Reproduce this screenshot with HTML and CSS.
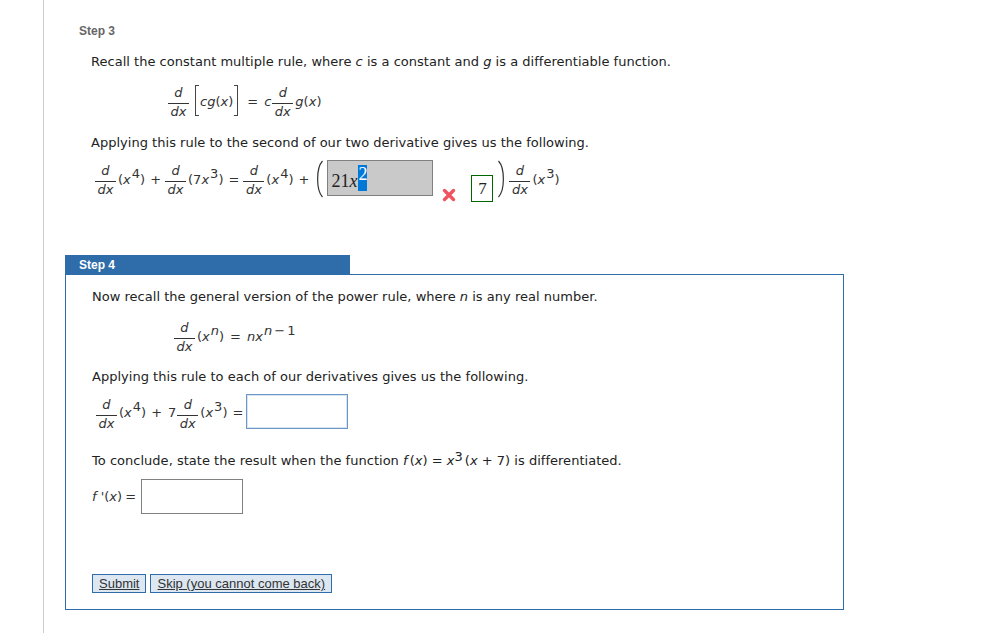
FILE: index.html
```html
<!DOCTYPE html>
<html lang="en">
<head>
<meta charset="utf-8">
<title>Step 4</title>
<link rel="stylesheet" href="styles.css">
</head>
<body>
<main class="page">
  <section class="prev">
    <h2 class="step-label">Step 3</h2>
    <div class="body-prev">
      <p class="line l1">Recall the constant multiple rule, where <i>c</i> is a constant and <i>g</i> is a differentiable function.</p>
      <div class="math f1">
        <span class="frac"><span class="num">d</span><span class="den">dx</span></span>
        <span class="bracket-l"></span><i class="cg">cg</i><span>(</span><i>x</i><span>)</span><span class="bracket-r"></span>
        <span class="eq">=</span><i class="c">c</i>
        <span class="frac"><span class="num">d</span><span class="den">dx</span></span>
        <i>g</i><span>(</span><i>x</i><span>)</span>
      </div>
      <p class="line l2">Applying this rule to the second of our two derivative gives us the following.</p>
      <div class="math f2">
        <span class="frac"><span class="num">d</span><span class="den">dx</span></span>
        <span class="term">(<i>x</i><sup>4</sup>)</span><span class="op">+</span>
        <span class="frac"><span class="num">d</span><span class="den">dx</span></span>
        <span class="term">(7<i>x</i><sup>3</sup>)</span><span class="op">=</span>
        <span class="frac"><span class="num">d</span><span class="den">dx</span></span>
        <span class="term">(<i>x</i><sup>4</sup>)</span><span class="op">+</span>
        <svg class="paren" width="11" height="38" viewBox="0 0 11 38"><path d="M9.5 1C3 8 3 30 9.5 37" fill="none" stroke="#333" stroke-width="1.2"/></svg>
        <span class="answer">21<i>x</i><span class="sel">2</span></span>
        <svg class="cross" width="14" height="14" viewBox="0 0 14 14"><path d="M2.5 2.5L11.5 11.5M11.5 2.5L2.5 11.5" stroke="#f0555f" stroke-width="3.4" stroke-linecap="round"/></svg>
        <span class="correct">7</span>
        <svg class="paren closing" width="11" height="38" viewBox="0 0 11 38"><path d="M1.5 1C8 8 8 30 1.5 37" fill="none" stroke="#333" stroke-width="1.2"/></svg>
        <span class="frac"><span class="num">d</span><span class="den">dx</span></span>
        <span class="term">(<i>x</i><sup>3</sup>)</span>
      </div>
    </div>
  </section>

  <section class="current">
    <h2 class="tab">Step 4</h2>
    <div class="box">
      <p class="line b1">Now recall the general version of the power rule, where <i>n</i> is any real number.</p>
      <div class="math f3">
        <span class="frac"><span class="num">d</span><span class="den">dx</span></span>
        <span class="term">(<i>x</i><sup><i>n</i></sup>)</span><span class="op">=</span>
        <span class="term"><i>nx</i><sup class="exp"><i>n</i> &minus; 1</sup></span>
      </div>
      <p class="line b2">Applying this rule to each of our derivatives gives us the following.</p>
      <div class="math f4">
        <span class="frac"><span class="num">d</span><span class="den">dx</span></span>
        <span class="term">(<i>x</i><sup>4</sup>)</span><span class="op">+</span><span class="seven">7</span>
        <span class="frac"><span class="num">d</span><span class="den">dx</span></span>
        <span class="term">(<i>x</i><sup>3</sup>)</span><span class="op">=</span>
        <input class="field focus" type="text" aria-label="answer">
      </div>
      <p class="line b3">To conclude, state the result when the function <i class="fn">f</i>(<i>x</i>) = <i>x</i><sup class="cube">3</sup>(<i>x</i> + 7) is differentiated.</p>
      <div class="math f5">
        <span class="term"><i>f</i> '(<i>x</i>)</span><span class="op">=</span>
        <input class="field" type="text" aria-label="f prime of x">
      </div>
      <div class="actions">
        <button class="btn" type="button">Submit</button>
        <button class="btn" type="button">Skip (you cannot come back)</button>
      </div>
    </div>
  </section>
</main>
</body>
</html>
```

FILE: styles.css
```css
html, body { margin: 0; padding: 0; background: #fff; }
body { width: 992px; height: 633px; overflow: hidden; font-family: "DejaVu Sans", Verdana, sans-serif; font-size: 13px; color: #222; }
.page { margin-left: 43px; width: 801px; height: 633px; box-sizing: border-box; border-left: 1px solid #ccc; padding-left: 21px; padding-top: 23px; }
.step-label { margin: 0; font: bold 12px/16px "Liberation Sans", Arial, sans-serif; color: #666; padding-left: 14px; }
.body-prev { padding-left: 26px; }
.line { margin: 0; line-height: 18px; white-space: nowrap; letter-spacing: .02px; }
.line sup { font-size: 13px; line-height: 0; vertical-align: 4px; }
.fn { margin-right: 2px; }
.cube { margin-right: 2px; }
.l1 { margin-top: 14px; }
.math { display: flex; align-items: center; white-space: nowrap; color: #333; }
.math i { font-style: italic; }
.frac { display: inline-flex; flex-direction: column; align-items: center; width: 21px; line-height: 15px; font-style: italic; margin: 2px 2px 0 0; flex: none; }
.num { padding-bottom: 3px; }
.den { border-top: 1px solid #333; width: 100%; text-align: center; }
.term sup { font-size: 13px; line-height: 0; vertical-align: 6px; margin-left: 1px; }
.exp { word-spacing: -2px; }
.op { margin: 0 6px; }
.eq { margin: 0 6px 0 8px; }
.bracket-l, .bracket-r { width: 3px; height: 29px; border: 1px solid #444; margin-top: -1px; }
.bracket-l { border-right: 0; margin-left: 4px; margin-right: 1px; }
.bracket-r { border-left: 0; margin-left: 1px; margin-right: 1px; }
.c { margin-right: 1px; }
.f1 { margin: 14px 0 0 77px; height: 32px; }
.l2 { margin-top: 17px; }
.f2 { margin: 7px 0 0 4px; height: 40px; }
.f2 .op { margin-right: 4px; margin-left: 5px; }
.paren { flex: none; margin-right: 3px; }
.answer { width: 101px; height: 34px; flex: none; border: 1px solid #808080; background: #c9c9c9; font: 18px/41px "Liberation Serif", serif; color: #222; padding-left: 3px; margin-top: -2px; }
.sel { display: inline-block; background: #0078d7; color: #fff; height: 26px; width: 9px; vertical-align: top; line-height: 18px; margin: 4px 0 0 1px; text-align: center; }
.cross { margin: 32px 15px 0 9px; flex: none; }
.correct { width: 20px; height: 25px; flex: none; border: 1px solid #060; font: 17px/25px "Liberation Serif", serif; text-align: center; margin: 19px 4px 0 0; color: #222; }
.closing { margin: 0 1px 0 0; }
.current { margin-top: 56px; }
.tab { margin: 0; width: 285px; height: 20px; box-sizing: border-box; background: #2e6da9; color: #fff; font: bold 12px/20px "Liberation Sans", Arial, sans-serif; padding-left: 14px; }
.box { width: 779px; height: 336px; box-sizing: border-box; border: 1px solid #2e6da9; margin-top: -1px; padding: 13px 0 0 26px; }
.f3 { margin: 10px 0 0 82px; height: 40px; }
.b2 { margin-top: 12px; }
.f4 { margin: 9px 0 0 4px; height: 35px; }
.f4 .op { margin-left: 5px; }
.field { width: 102px; height: 35px; box-sizing: border-box; border: 1px solid #808080; background: #fff; padding: 0; margin: 0; flex: none; }
.focus { border: 1px solid #6c97c6; box-shadow: inset 0 0 0 1px #d6e4f2; margin: -2px 0 0 -3px; }
.seven { margin-right: 1px; }
.b3 { margin-top: 22px; }
.f5 { margin-top: 9px; height: 35px; }
.f5 .op { margin: 0 5px 0 3px; }
.actions { display: flex; gap: 4px; margin-top: 60px; }
.btn { height: 19px; padding: 0 6px; border: 1px solid #2e6da9; background: #dce7f1; font: 13px/15px "Liberation Sans", Arial, sans-serif; color: #333; text-decoration: underline; }
```
